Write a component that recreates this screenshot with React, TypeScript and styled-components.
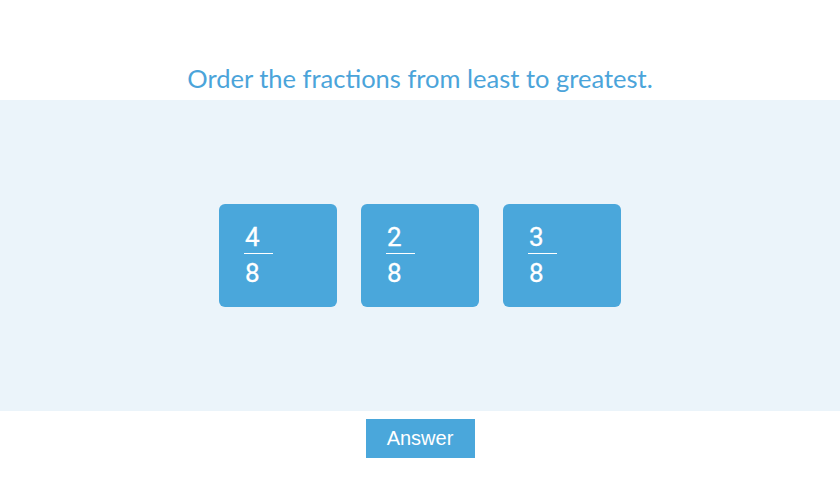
import styled, { createGlobalStyle } from "styled-components";

const GlobalStyle = createGlobalStyle`
  html, body {
    margin: 0;
    padding: 0;
    background: #ffffff;
  }
`;

const Page = styled.div`
  width: 840px;
  height: 501px;
  display: flex;
  flex-direction: column;
  font-family: "Lato", "Open Sans", sans-serif;
`;

const Title = styled.h1`
  margin: 0;
  height: 100px;
  box-sizing: border-box;
  padding-top: 61px;
  text-align: center;
  font-size: 25.5px;
  font-weight: 400;
  line-height: 34px;
  color: #4ba4da;
`;

const Board = styled.div`
  height: 311px;
  background: #ebf4fa;
  display: flex;
  justify-content: center;
  align-items: flex-start;
  padding-top: 104px;
  box-sizing: border-box;
  gap: 24px;
`;

const Card = styled.div`
  width: 118px;
  height: 103px;
  box-sizing: border-box;
  background: #4aa7db;
  border-radius: 6px;
  padding: 19px 0 0 25px;
  cursor: grab;
`;

const Fraction = styled.div`
  display: inline-flex;
  flex-direction: column;
  align-items: flex-start;
  color: #ffffff;
  font-family: "Roboto", "Open Sans", sans-serif;
  font-size: 26px;
  font-weight: 400;
  line-height: 28px;
  -webkit-text-stroke: 0.3px #ffffff;
`;

const Digit = styled.span`
  padding-left: 1px;
`;

const Bar = styled.span`
  display: block;
  width: 29px;
  height: 1px;
  background: #ffffff;
  margin: 2px 0 5px 0;
`;

const Footer = styled.div`
  display: flex;
  justify-content: center;
  padding-top: 8px;
`;

const AnswerButton = styled.button`
  width: 109px;
  height: 39px;
  border: 0;
  padding: 0;
  background: #4aa7db;
  color: #ffffff;
  font-family: "Liberation Sans", Arial, sans-serif;
  font-size: 20px;
  cursor: pointer;
`;

const fractions = [
  { num: 4, den: 8 },
  { num: 2, den: 8 },
  { num: 3, den: 8 },
];

export default function App() {
  return (
    <Page>
      <GlobalStyle />
      <Title>Order the fractions from least to greatest.</Title>
      <Board>
        {fractions.map((f, i) => (
          <Card key={i}>
            <Fraction>
              <Digit>{f.num}</Digit>
              <Bar />
              <Digit>{f.den}</Digit>
            </Fraction>
          </Card>
        ))}
      </Board>
      <Footer>
        <AnswerButton type="button">Answer</AnswerButton>
      </Footer>
    </Page>
  );
}
